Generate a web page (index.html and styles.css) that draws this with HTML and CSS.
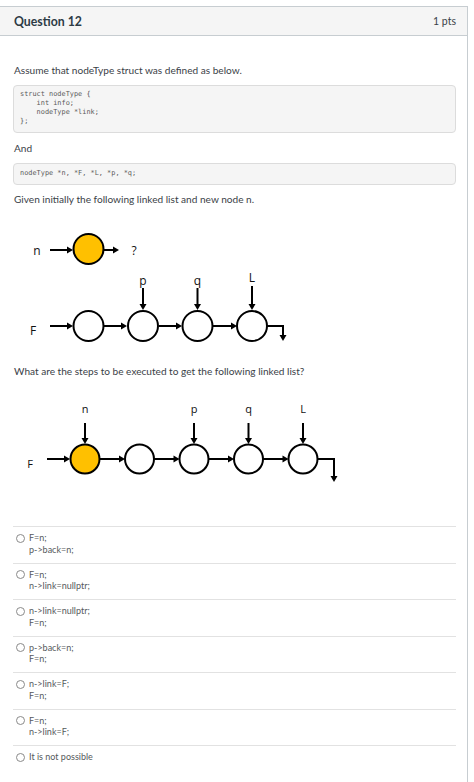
FILE: index.html
```html
<!DOCTYPE html>
<html>
<head>
<meta charset="utf-8">
<link rel="stylesheet" href="styles.css">
</head>
<body>
<div class="question">
  <div class="q-header">
    <span class="q-title">Question 12</span>
    <span class="q-pts">1 pts</span>
  </div>
  <div class="q-body">
    <p class="txt first">Assume that nodeType struct was defined as below.</p>
    <pre class="code code1">struct nodeType {
    int info;
    nodeType *link;
};</pre>
    <p class="txt and">And</p>
    <pre class="code code2">nodeType *n, *F, *L, *p, *q;</pre>
    <p class="txt given">Given initially the following linked list and new node n.</p>
    <svg class="diag diag1" width="300" height="148" viewBox="13 210 300 148">
      <g class="lbl">
        <text x="37" y="256">n</text>
        <text x="134" y="256">?</text>
        <text x="143" y="286">p</text>
        <text x="197.5" y="286">q</text>
        <text x="252" y="283">L</text>
        <text x="33" y="336">F</text>
      </g>
      <g class="ln">
        <line x1="50" y1="251" x2="68" y2="251"/>
        <line x1="104" y1="251" x2="114" y2="251"/>
        <line x1="50" y1="327" x2="68" y2="327"/>
        <line x1="104" y1="327" x2="122" y2="327"/>
        <line x1="159" y1="327" x2="177" y2="327"/>
        <line x1="213" y1="327" x2="232" y2="327"/>
        <polyline points="267,327 283,327 283,337"/>
        <line x1="143" y1="289" x2="143" y2="306"/>
        <line x1="197.5" y1="289" x2="197.5" y2="306"/>
        <line x1="252" y1="287" x2="252" y2="306"/>
      </g>
      <g class="hd">
        <polygon points="67,247.5 73,251 67,254.5"/>
        <polygon points="113,247.5 119,251 113,254.5"/>
        <polygon points="67,323.5 73,327 67,330.5"/>
        <polygon points="121,323.5 127,327 121,330.5"/>
        <polygon points="176,323.5 182,327 176,330.5"/>
        <polygon points="231,323.5 237,327 231,330.5"/>
        <polygon points="279.5,336 283,342 286.5,336"/>
        <polygon points="139.5,305 143,311 146.5,305"/>
        <polygon points="194,305 197.5,311 201,305"/>
        <polygon points="248.5,305 252,311 255.5,305"/>
      </g>
      <g class="nd">
        <circle class="hot" cx="88.5" cy="250" r="15"/>
        <circle cx="88.5" cy="327" r="15"/>
        <circle cx="143" cy="327" r="15"/>
        <circle cx="197.5" cy="327" r="15"/>
        <circle cx="252" cy="327" r="15"/>
      </g>
    </svg>
    <p class="txt what">What are the steps to be executed to get the following linked list?</p>
    <svg class="diag diag2" width="330" height="108" viewBox="13 385 330 108">
      <g class="lbl sm">
        <text x="85" y="414">n</text>
        <text x="194" y="414">p</text>
        <text x="248.5" y="414">q</text>
        <text x="303" y="414">L</text>
        <text x="30" y="469">F</text>
      </g>
      <g class="ln">
        <line x1="47" y1="460" x2="65" y2="460"/>
        <line x1="100" y1="460" x2="120" y2="460"/>
        <line x1="154" y1="460" x2="174" y2="460"/>
        <line x1="208.5" y1="460" x2="229" y2="460"/>
        <line x1="263" y1="460" x2="284" y2="460"/>
        <polyline points="317.5,460 334,460 334,478"/>
        <line x1="85" y1="424" x2="85" y2="440"/>
        <line x1="194" y1="424" x2="194" y2="440"/>
        <line x1="248.5" y1="424" x2="248.5" y2="440"/>
        <line x1="303" y1="424" x2="303" y2="440"/>
      </g>
      <g class="hd">
        <polygon points="64,456.5 70,460 64,463.5"/>
        <polygon points="119,456.5 125,460 119,463.5"/>
        <polygon points="173.5,456.5 179.5,460 173.5,463.5"/>
        <polygon points="228,456.5 234,460 228,463.5"/>
        <polygon points="282.5,456.5 288.5,460 282.5,463.5"/>
        <polygon points="330.5,477 334,483 337.5,477"/>
        <polygon points="81.5,439 85,445 88.5,439"/>
        <polygon points="190.5,439 194,445 197.5,439"/>
        <polygon points="245,439 248.5,445 252,439"/>
        <polygon points="299.5,439 303,445 306.5,439"/>
      </g>
      <g class="nd">
        <circle class="hot" cx="85" cy="460" r="14.5"/>
        <circle cx="139.5" cy="460" r="14.5"/>
        <circle cx="194" cy="460" r="14.5"/>
        <circle cx="248.5" cy="460" r="14.5"/>
        <circle cx="303" cy="460" r="14.5"/>
      </g>
    </svg>
    <div class="answers">
      <label class="ans"><span class="radio"></span><span class="ans-text">F=n;<br>p-&gt;back=n;</span></label>
      <label class="ans"><span class="radio"></span><span class="ans-text">F=n;<br>n-&gt;link=nullptr;</span></label>
      <label class="ans"><span class="radio"></span><span class="ans-text">n-&gt;link=nullptr;<br>F=n;</span></label>
      <label class="ans"><span class="radio"></span><span class="ans-text">p-&gt;back=n;<br>F=n;</span></label>
      <label class="ans"><span class="radio"></span><span class="ans-text">n-&gt;link=F;<br>F=n;</span></label>
      <label class="ans"><span class="radio"></span><span class="ans-text">F=n;<br>n-&gt;link=F;</span></label>
      <label class="ans"><span class="radio"></span><span class="ans-text">It is not possible</span></label>
    </div>
  </div>
</div>
</body>
</html>
```

FILE: styles.css
```css
html, body {
  margin: 0;
  padding: 0;
  background: #fff;
}
body {
  font-family: Lato, "Open Sans", "Liberation Sans", sans-serif;
  color: #3a4147;
  overflow: hidden;
}
.question {
  margin-top: 6px;
  width: 467px;
  border-top: 1px solid #c7cdd1;
  border-right: 1px solid #c7cdd1;
  min-height: 800px;
}
.q-header {
  height: 28px;
  background: #f5f5f5;
  border-bottom: 1px solid #c7cdd1;
  display: flex;
  align-items: center;
  justify-content: space-between;
  padding: 0 11px 0 14px;
}
.q-title {
  font-weight: 700;
  font-size: 12.3px;
  color: #2d3b45;
}
.q-pts {
  font-size: 10.5px;
  color: #3a4147;
}
.q-body {
  padding: 0 11px 0 13px;
}
.txt {
  margin: 0;
  font-size: 10.1px;
  line-height: 14px;
  padding-left: 1px;
}
.txt.first { margin-top: 27px; }
.txt.and { margin-top: 8px; }
.txt.given { margin-top: 7px; }
.txt.what { margin-top: 7px; }
.code {
  margin: 8px 0 0;
  background: #f5f5f5;
  border: 1px solid #dcdcdc;
  border-radius: 4px;
  font-family: "DejaVu Sans Mono", "Liberation Mono", monospace;
  font-size: 6.9px;
  line-height: 9px;
  color: #5a5a5a;
  white-space: pre;
}
.code1 { padding: 4px 6px 6px 6px; }
.code2 { padding: 5px 6px 6px 6px; }
.diag {
  display: block;
}
.diag1 { margin-top: 3px; }
.diag2 { margin-top: 6px; }
.lbl text {
  font-family: "Open Sans", "Liberation Sans", sans-serif;
  font-size: 12px;
  fill: #111;
  text-anchor: middle;
}
.lbl.sm text { font-size: 11px; }
.ln line, .ln polyline {
  stroke: #000;
  stroke-width: 2;
  fill: none;
}
.hd polygon { fill: #000; }
.nd circle {
  fill: #fff;
  stroke: #000;
  stroke-width: 2;
}
.nd circle.hot { fill: #ffc000; }
.answers {
  margin-top: 34px;
}
.ans {
  display: flex;
  align-items: flex-start;
  border-top: 1px solid #e2e2e2;
  padding: 5px 0 7.5px 3px;
  font-size: 9px;
  line-height: 11.5px;
  color: #55595c;
}
.radio {
  flex: none;
  width: 7px;
  height: 7px;
  border: 1px solid #8a8a8a;
  border-radius: 50%;
  margin-top: 1.5px;
  margin-right: 4px;
  background: #fff;
}
.ans-text {
  display: block;
}
```
